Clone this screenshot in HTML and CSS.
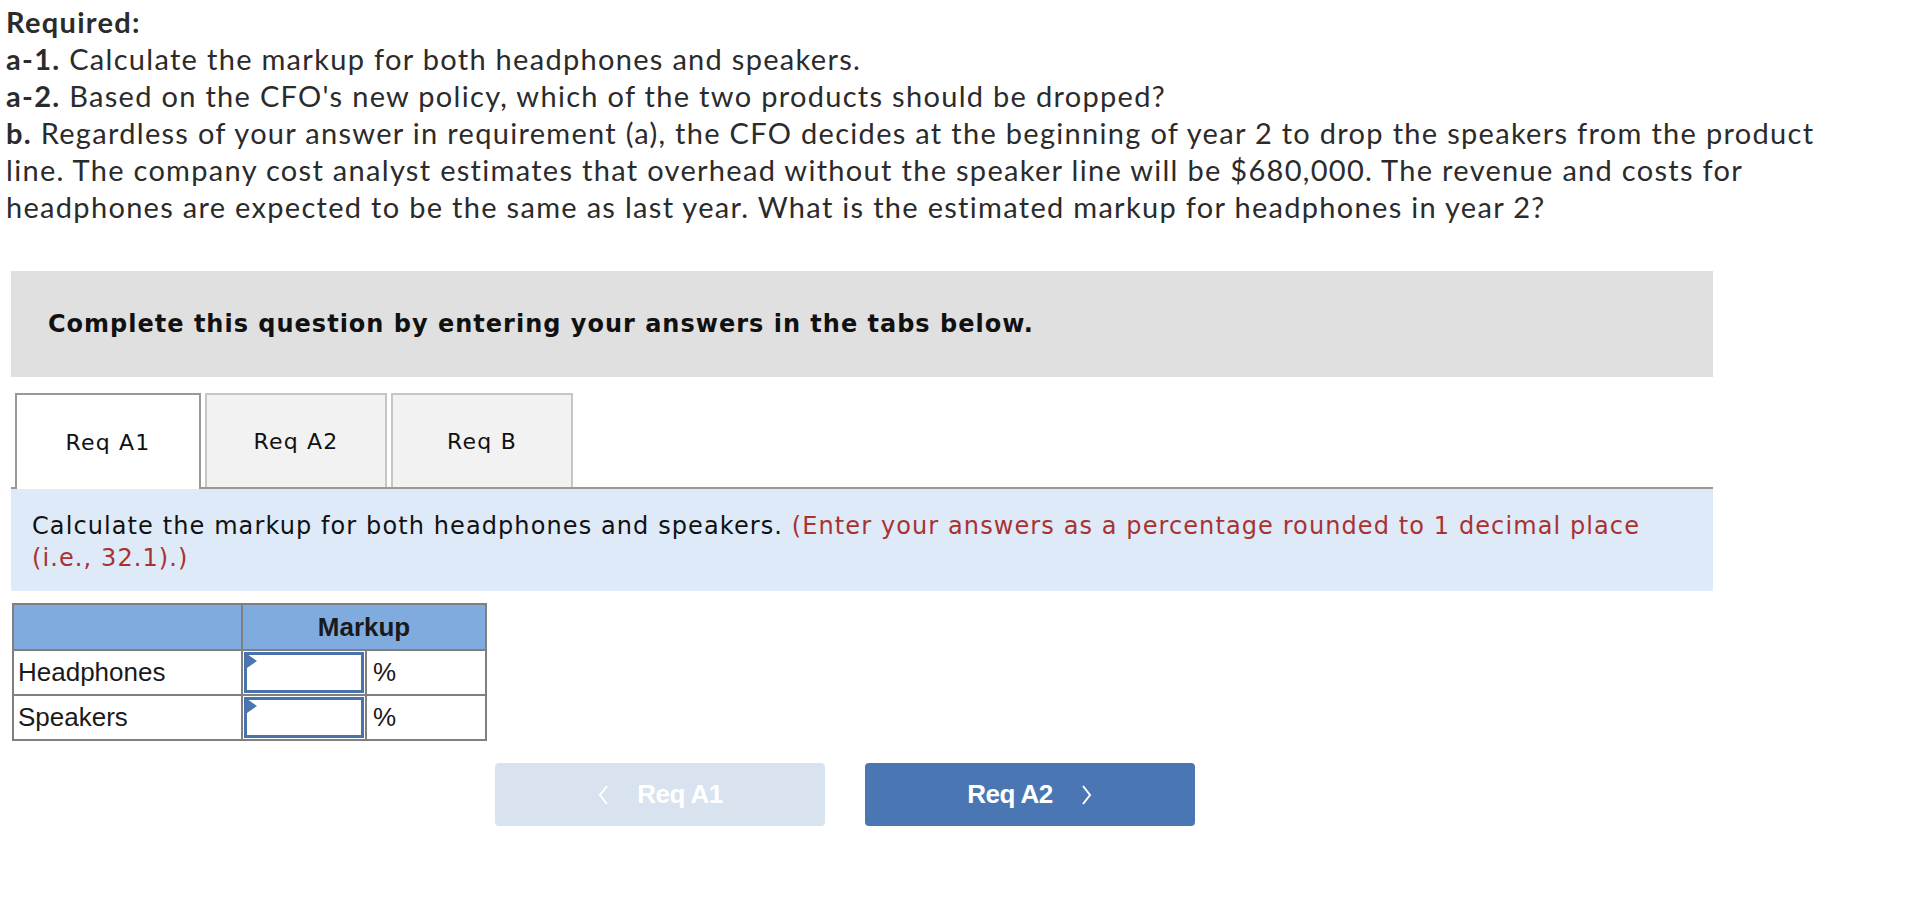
FILE: index.html
```html
<!DOCTYPE html>
<html>
<head>
<meta charset="utf-8">
<link rel="stylesheet" href="styles.css">
</head>
<body>
<div class="intro">
  <div class="req-title">Required:</div>
  <div><b>a-1.</b> Calculate the markup for both headphones and speakers.</div>
  <div><b>a-2.</b> Based on the CFO's new policy, which of the two products should be dropped?</div>
  <div><b>b.</b> Regardless of your answer in requirement (a), the CFO decides at the beginning of year 2 to drop the speakers from the product line. The company cost analyst estimates that overhead without the speaker line will be $680,000. The revenue and costs for headphones are expected to be the same as last year. What is the estimated markup for headphones in year 2?</div>
</div>

<div class="panel">
  <div class="banner">Complete this question by entering your answers in the tabs below.</div>

  <div class="tabs">
    <div class="tab active">Req A1</div>
    <div class="tab">Req A2</div>
    <div class="tab">Req B</div>
  </div>

  <div class="info">
    Calculate the markup for both headphones and speakers. <span class="hint">(Enter your answers as a percentage rounded to 1 decimal place (i.e., 32.1).)</span>
  </div>

  <table class="grid">
    <tr class="head">
      <th class="c1"></th>
      <th colspan="2">Markup</th>
    </tr>
    <tr>
      <td class="c1">Headphones</td>
      <td class="c2"><div class="inp"><span class="flag"></span></div></td>
      <td class="c3">%</td>
    </tr>
    <tr>
      <td class="c1">Speakers</td>
      <td class="c2"><div class="inp"><span class="flag"></span></div></td>
      <td class="c3">%</td>
    </tr>
  </table>

  <div class="nav">
    <div class="btn prev">
      <svg class="chev" width="12" height="22" viewBox="0 0 12 22"><polyline points="10,2 3,11 10,20" fill="none" stroke="#ffffff" stroke-width="2"/></svg>
      <span>Req A1</span>
    </div>
    <div class="btn next">
      <span>Req A2</span>
      <svg class="chev" width="12" height="22" viewBox="0 0 12 22"><polyline points="2,2 9,11 2,20" fill="none" stroke="#ffffff" stroke-width="2"/></svg>
    </div>
  </div>
</div>
</body>
</html>
```
FILE: styles.css
```css
html, body {
  margin: 0;
  padding: 0;
  background: #ffffff;
}

body {
  color: #1a1a1a;
}

.intro {
  font-family: "Lato", "Open Sans", sans-serif;
  font-size: 29px;
  line-height: 37px;
  letter-spacing: 1.3px;
  padding: 3px 51px 0 6px;
  color: #2b2b2b;
}

.intro b, .req-title {
  font-weight: 700;
}

.panel {
  margin-left: 11px;
  width: 1702px;
}

.banner {
  margin-top: 46px;
  height: 106px;
  background: #e0e0e0;
  display: flex;
  align-items: center;
  padding-left: 37px;
  font-family: "DejaVu Sans", Verdana, sans-serif;
  font-weight: bold;
  font-size: 24px;
  letter-spacing: 1px;
  color: #111;
}

.tabs {
  display: flex;
  gap: 4px;
  margin-top: 16px;
  padding-left: 4px;
  height: 94px;
  position: relative;
  z-index: 1;
}

.tab {
  width: 182px;
  height: 94px;
  box-sizing: border-box;
  border: 2px solid #c6c6c6;
  border-bottom: none;
  background: #f2f2f2;
  display: flex;
  align-items: center;
  justify-content: center;
  font-family: "DejaVu Sans", Verdana, sans-serif;
  font-size: 22px;
  letter-spacing: 1.2px;
  color: #111;
}

.tab.active {
  width: 186px;
  height: 96px;
  background: #ffffff;
  border-color: #999999;
}

.info {
  border-top: 2px solid #999999;
  background: #deeaf7;
  height: 104px;
  box-sizing: border-box;
  padding: 21px 21px 0 21px;
  font-family: "DejaVu Sans", Verdana, sans-serif;
  font-size: 24px;
  line-height: 32px;
  letter-spacing: 1.1px;
  color: #111;
}

.hint {
  color: #a83232;
}

.grid {
  margin-top: 12px;
  margin-left: 1px;
  border-collapse: collapse;
  font-family: "Liberation Sans", Arial, sans-serif;
  font-size: 26px;
  color: #1a1a1a;
}

.grid th, .grid td {
  border: 2px solid #7f7f7f;
  padding: 0;
}

.grid .head th {
  background: #80abdf;
  height: 44px;
  font-weight: bold;
  text-align: center;
}

.grid td {
  height: 41px;
}

.grid .c1 {
  width: 229px;
  padding-left: 4px;
  box-sizing: border-box;
}

.grid th.c1 {
  padding: 0;
}

.grid .c2 {
  width: 122px;
  padding: 0;
  vertical-align: middle;
}

.grid .c3 {
  width: 120px;
  padding-left: 6px;
  box-sizing: border-box;
}

.inp {
  position: relative;
  margin: 1px;
  height: 41px;
  box-sizing: border-box;
  border: 3px solid #4a72ad;
  background: #ffffff;
}

.flag {
  position: absolute;
  left: 0;
  top: -1px;
  width: 0;
  height: 0;
  border-top: 7px solid transparent;
  border-bottom: 7px solid transparent;
  border-left: 10px solid #4a77b4;
}

.nav {
  display: flex;
  gap: 40px;
  margin-top: 22px;
  margin-left: 484px;
}

.btn {
  width: 330px;
  height: 63px;
  border-radius: 4px;
  display: flex;
  align-items: center;
  justify-content: center;
  gap: 28px;
  font-family: "Liberation Sans", Arial, sans-serif;
  font-weight: bold;
  font-size: 26px;
  color: #ffffff;
  letter-spacing: -0.5px;
}

.btn.prev {
  background: #d9e3ef;
}

.btn.next {
  background: #4a77b4;
}

.chev {
  display: block;
}
```
